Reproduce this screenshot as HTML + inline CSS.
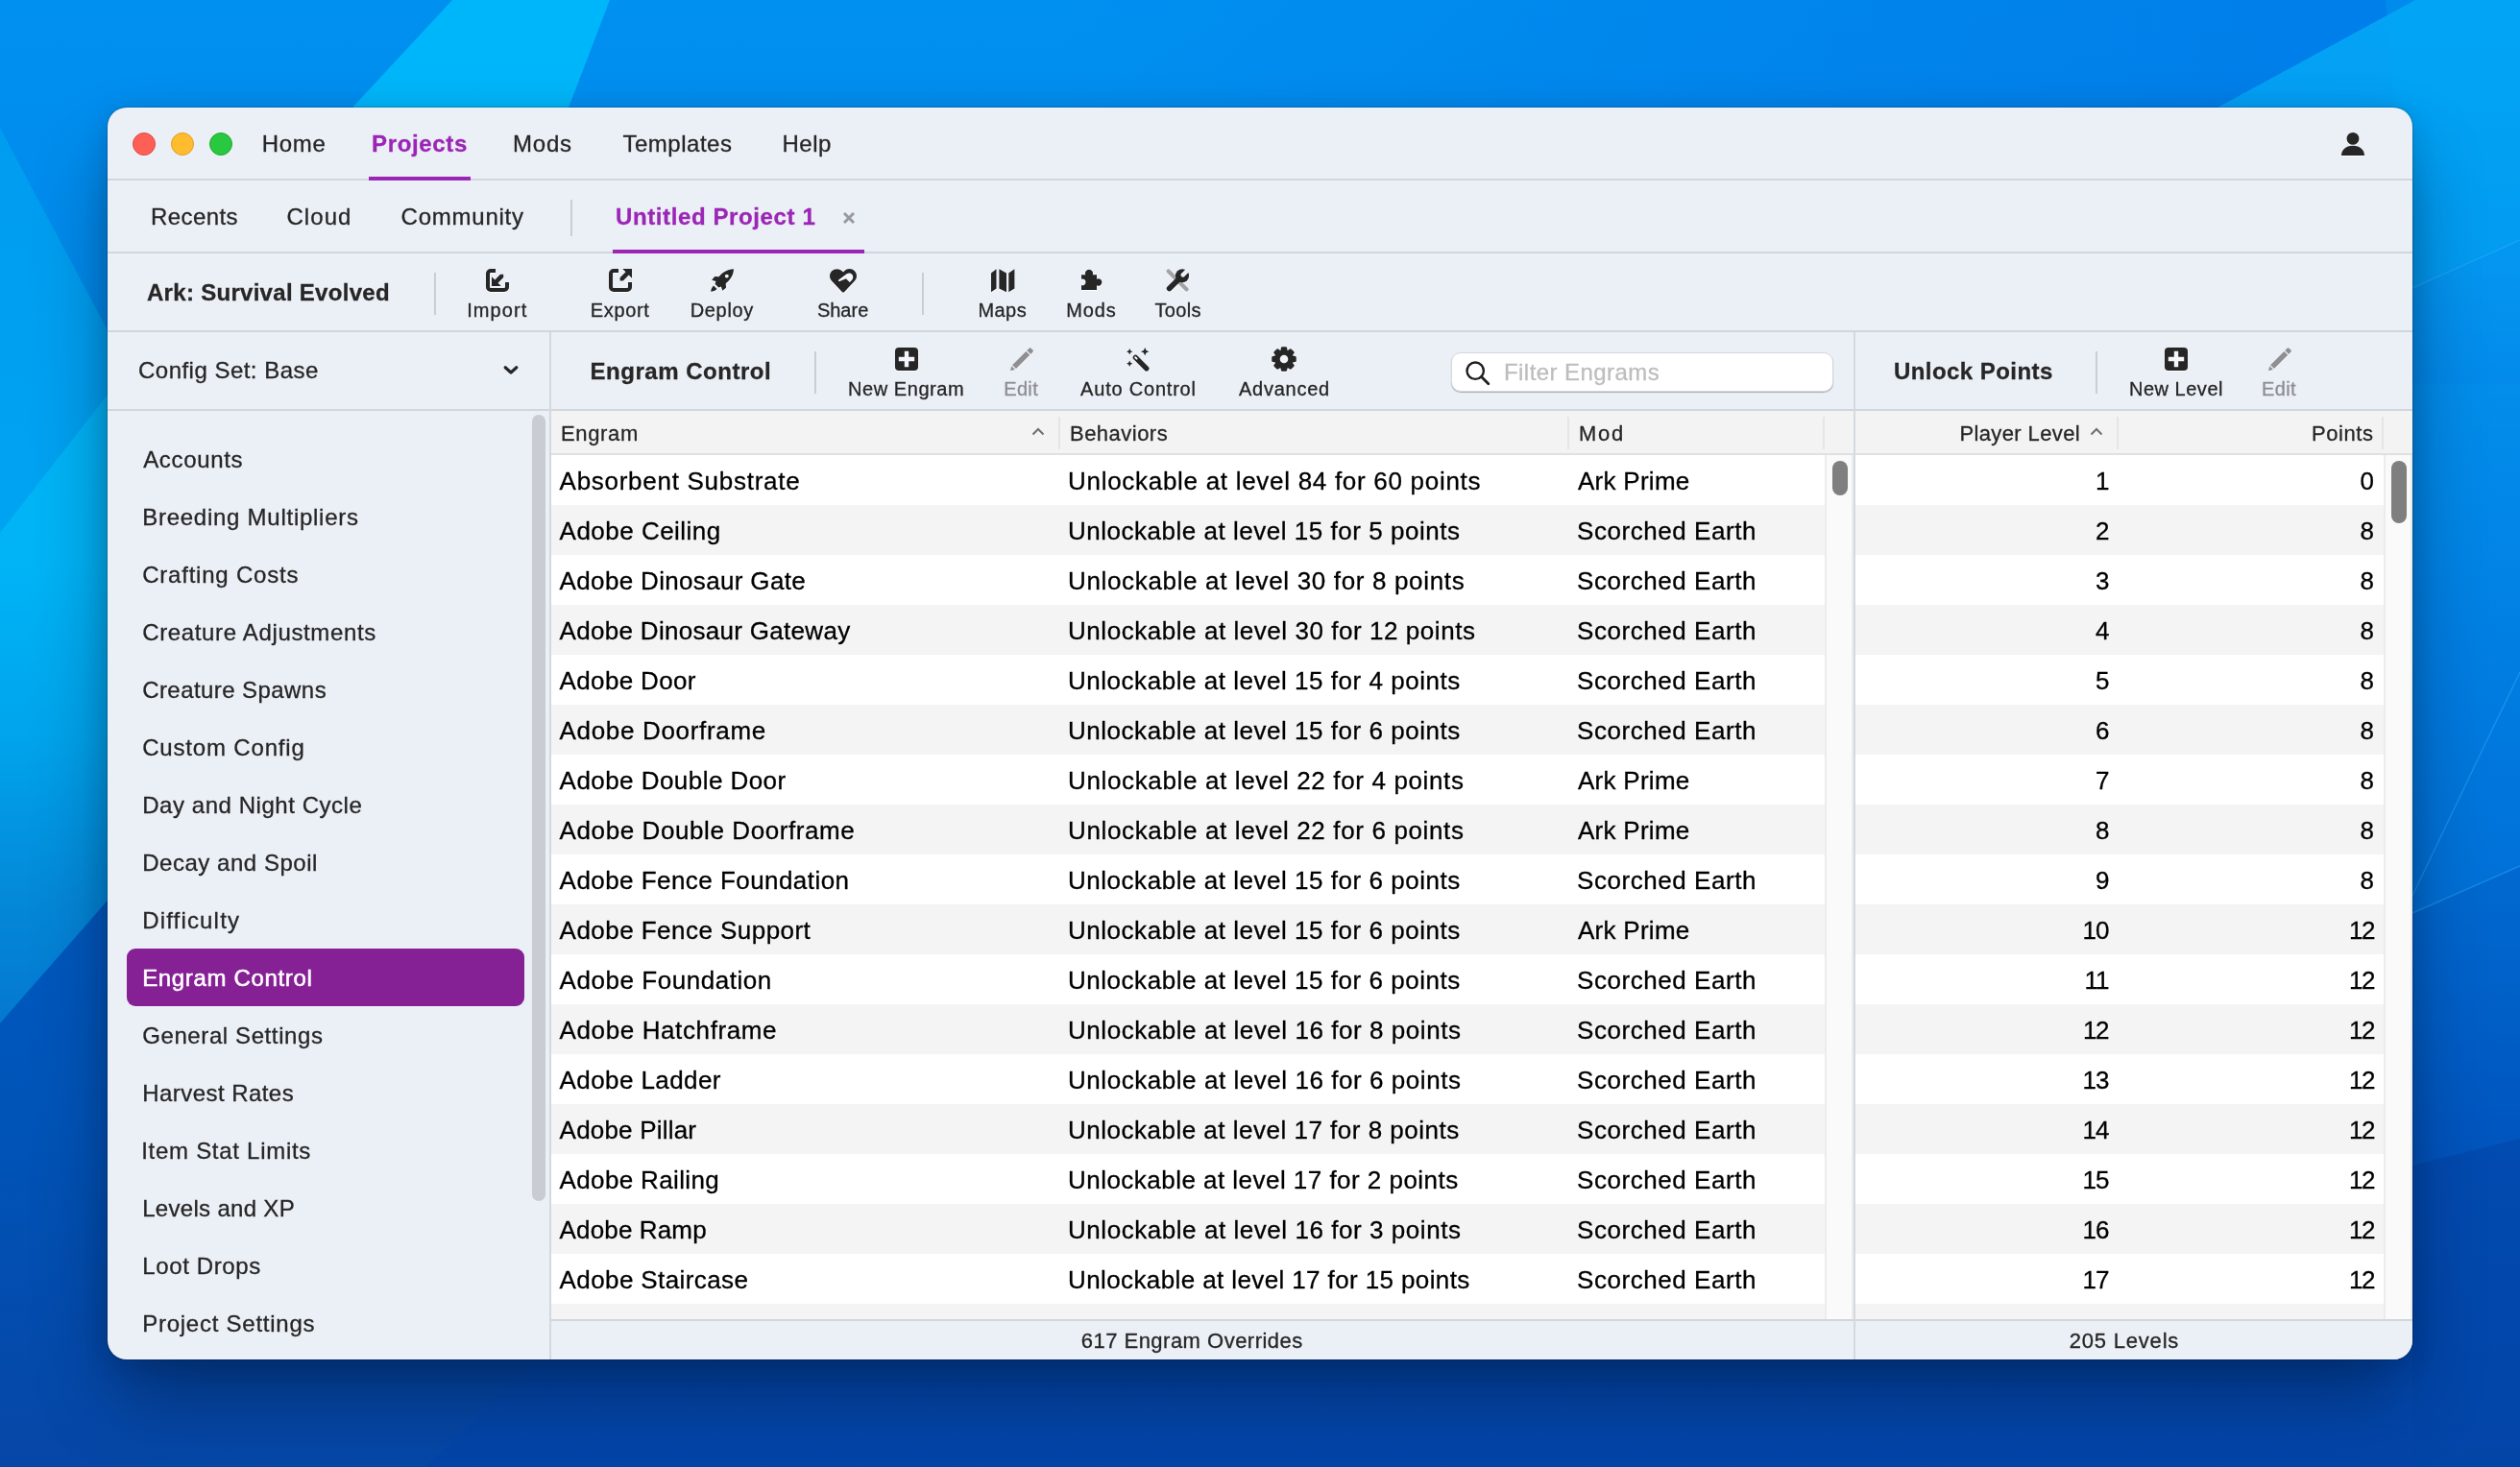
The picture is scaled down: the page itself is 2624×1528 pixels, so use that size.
<!DOCTYPE html><html lang="en"><head><meta charset="utf-8"><title>Beacon - Untitled Project 1</title>
<style>
html,body{margin:0;padding:0}
body{width:2624px;height:1528px;overflow:hidden;position:relative;background:#0a6fd6;font-family:"Liberation Sans", sans-serif;color:#262626}
#wall{position:absolute;left:0;top:0}
#fg{position:absolute;left:0;top:0;width:2624px;height:1528px;will-change:transform}
.t{position:absolute;white-space:nowrap;line-height:1.2;-webkit-text-stroke:.3px currentColor}
.ic{position:absolute;overflow:visible;filter:drop-shadow(0 1px 0 rgba(255,255,255,.85))}
#win{position:absolute;left:112px;top:112px;width:2400px;height:1304px;border-radius:20px;background:#ebeff6;
 box-shadow:0 0 0 1px rgba(0,0,0,.16),0 44px 80px -8px rgba(0,12,40,.46),0 6px 26px rgba(0,12,40,.15)}
#clip{position:absolute;left:112px;top:112px;width:2400px;height:1304px;border-radius:20px;overflow:hidden}
#clip>*{position:absolute}
.g{display:contents}
.sel{-webkit-text-stroke:.55px currentColor}
.hl{position:absolute;left:0;width:2400px;height:2px;background:#d1d5dc}
.vl{position:absolute;width:2px;background:#d4d8df}
.sep{position:absolute;width:2px;background:#c9cdd4}
.tl{position:absolute;width:24px;height:24px;border-radius:50%;top:138px;box-sizing:border-box}
.row{position:absolute;height:52px}
.alt{background:#f4f4f5}
.wh{background:#fff}

</style></head><body>
<svg id="wall" width="2624" height="1528" viewBox="0 0 2624 1528">
<defs>
<linearGradient id="g0" x1="0" y1="0" x2="0" y2="1"><stop offset="0" stop-color="#0090f0"/><stop offset=".35" stop-color="#0086e8"/><stop offset=".62" stop-color="#006fd6"/><stop offset=".8" stop-color="#0054be"/><stop offset="1" stop-color="#0444a8"/></linearGradient>
<linearGradient id="gA" x1="0" y1="0" x2="0" y2="1"><stop offset="0" stop-color="#00b6fa"/><stop offset=".55" stop-color="#00b4f6"/><stop offset=".72" stop-color="#00a4ec"/><stop offset=".88" stop-color="#0488d8"/><stop offset="1" stop-color="#0478d0"/></linearGradient>
<linearGradient id="gB" x1="0" y1="0" x2="0" y2="1"><stop offset="0" stop-color="#009cf0"/><stop offset="1" stop-color="#00a6f2"/></linearGradient>
<linearGradient id="gR" x1="0" y1="0" x2="0" y2="700" gradientUnits="userSpaceOnUse"><stop offset="0" stop-color="#04a4f6"/><stop offset=".4" stop-color="#0496f0"/><stop offset="1" stop-color="#0480e0" stop-opacity="0"/></linearGradient>
<linearGradient id="gT" x1="1100" y1="0" x2="2400" y2="0" gradientUnits="userSpaceOnUse"><stop offset="0" stop-color="#0070e4" stop-opacity="0"/><stop offset="1" stop-color="#0070e4" stop-opacity=".55"/></linearGradient>
<linearGradient id="gD" x1="0" y1="0" x2="0" y2="1"><stop offset="0" stop-color="#0060c8"/><stop offset=".6" stop-color="#0054b8"/><stop offset="1" stop-color="#0646a6"/></linearGradient>
</defs>
<rect width="2624" height="1528" fill="url(#g0)"/>
<polygon points="0,133 112,344 400,700 0,700" fill="url(#gB)"/>
<polygon points="0,555 112,411 367,112 471,0 635,0 592,112 401,610 112,938 0,1066" fill="url(#gA)"/>
<polygon points="0,1066 112,938 401,610 700,1100 560,1416 443,1528 0,1528" fill="url(#gD)"/>
<rect x="1100" y="0" width="1524" height="400" fill="url(#gT)"/>
<polygon points="2515,0 2624,0 2624,700 2512,700 2512,300 2309,112" fill="url(#gR)"/>
<polygon points="2484,0 2624,0 2624,250 2512,300 2492,112" fill="#00a8f6" opacity=".3"/>
<polygon points="2512,951 2624,902 2624,1528 2512,1528" fill="#0050b8" opacity=".25"/>
<polygon points="2512,1214 2624,1186 2624,1528 2512,1528" fill="#0444a4" opacity=".55"/>
<g stroke="#38b4ff" stroke-opacity=".4" stroke-width="1.500" fill="none"><path d="M2512 300L2624 250M2512 933L2593 764L2624 700M2512 951L2624 902"/></g>
</svg>
<div id="win"></div><div id="clip">
<div class="hl" style="top:74px"></div>
<div class="hl" style="top:150px"></div>
<div class="hl" style="top:232px"></div>
<div class="hl" style="top:314px"></div>
<div style="left:462px;top:316px;width:1356px;height:44px;background:#f3f3f3"></div>
<div style="left:1820px;top:316px;width:580px;height:44px;background:#f3f3f3"></div>
<div style="left:462px;top:360px;width:1938px;height:2px;background:#dfe0e2"></div>
<div class="row wh" style="left:462px;top:362px;width:1326px"></div>
<div class="row wh" style="left:1820px;top:362px;width:550px"></div>
<div class="row alt" style="left:462px;top:414px;width:1326px"></div>
<div class="row alt" style="left:1820px;top:414px;width:550px"></div>
<div class="row wh" style="left:462px;top:466px;width:1326px"></div>
<div class="row wh" style="left:1820px;top:466px;width:550px"></div>
<div class="row alt" style="left:462px;top:518px;width:1326px"></div>
<div class="row alt" style="left:1820px;top:518px;width:550px"></div>
<div class="row wh" style="left:462px;top:570px;width:1326px"></div>
<div class="row wh" style="left:1820px;top:570px;width:550px"></div>
<div class="row alt" style="left:462px;top:622px;width:1326px"></div>
<div class="row alt" style="left:1820px;top:622px;width:550px"></div>
<div class="row wh" style="left:462px;top:674px;width:1326px"></div>
<div class="row wh" style="left:1820px;top:674px;width:550px"></div>
<div class="row alt" style="left:462px;top:726px;width:1326px"></div>
<div class="row alt" style="left:1820px;top:726px;width:550px"></div>
<div class="row wh" style="left:462px;top:778px;width:1326px"></div>
<div class="row wh" style="left:1820px;top:778px;width:550px"></div>
<div class="row alt" style="left:462px;top:830px;width:1326px"></div>
<div class="row alt" style="left:1820px;top:830px;width:550px"></div>
<div class="row wh" style="left:462px;top:882px;width:1326px"></div>
<div class="row wh" style="left:1820px;top:882px;width:550px"></div>
<div class="row alt" style="left:462px;top:934px;width:1326px"></div>
<div class="row alt" style="left:1820px;top:934px;width:550px"></div>
<div class="row wh" style="left:462px;top:986px;width:1326px"></div>
<div class="row wh" style="left:1820px;top:986px;width:550px"></div>
<div class="row alt" style="left:462px;top:1038px;width:1326px"></div>
<div class="row alt" style="left:1820px;top:1038px;width:550px"></div>
<div class="row wh" style="left:462px;top:1090px;width:1326px"></div>
<div class="row wh" style="left:1820px;top:1090px;width:550px"></div>
<div class="row alt" style="left:462px;top:1142px;width:1326px"></div>
<div class="row alt" style="left:1820px;top:1142px;width:550px"></div>
<div class="row wh" style="left:462px;top:1194px;width:1326px"></div>
<div class="row wh" style="left:1820px;top:1194px;width:550px"></div>
<div class="row alt" style="left:462px;top:1246px;width:1326px"></div>
<div class="row alt" style="left:1820px;top:1246px;width:550px"></div>
<div style="left:1788px;top:362px;width:30px;height:900px;background:#fafafa;border-left:2px solid #ececec;border-right:2px solid #ececec;box-sizing:border-box"></div>
<div style="left:2370px;top:362px;width:30px;height:900px;background:#fafafa;border-left:2px solid #ececec;border-right:2px solid #ececec;box-sizing:border-box"></div>
<div style="left:1796px;top:368px;width:16px;height:36px;border-radius:8px;background:#7f7f7f"></div>
<div style="left:2378px;top:368px;width:16px;height:65px;border-radius:8px;background:#7f7f7f"></div>
<div style="left:462px;top:1262px;width:1938px;height:42px;background:#ebeff6"></div>
<div style="left:462px;top:1262px;width:1938px;height:2px;background:#d1d5dc"></div>
<div class="vl" style="left:460px;top:234px;height:1070px"></div>
<div class="vl" style="left:1818px;top:234px;height:1070px"></div>
<div style="left:990px;top:322px;width:2px;height:34px;background:#e5e5e7"></div>
<div style="left:1520px;top:322px;width:2px;height:34px;background:#e5e5e7"></div>
<div style="left:1786px;top:322px;width:2px;height:34px;background:#e5e5e7"></div>
<div style="left:2092px;top:322px;width:2px;height:34px;background:#e5e5e7"></div>
<div style="left:2368px;top:322px;width:2px;height:34px;background:#e5e5e7"></div>
<div style="left:442px;top:320px;width:14px;height:819px;border-radius:7px;background:#c9ccd2"></div>
<div style="left:20px;top:876px;width:414px;height:60px;border-radius:9px;background:#852095"></div>
<div style="left:272px;top:72px;width:106px;height:4px;background:#9b26b6"></div>
<div style="left:526px;top:148px;width:262px;height:4px;background:#9b26b6"></div>
<div class="sep" style="left:482px;top:96px;height:38px"></div>
<div class="sep" style="left:340px;top:172px;height:44px"></div>
<div class="sep" style="left:848px;top:172px;height:44px"></div>
<div class="sep" style="left:736px;top:254px;height:44px"></div>
<div class="sep" style="left:2070px;top:254px;height:44px"></div>
<div style="left:1399px;top:255px;width:398px;height:41px;border-radius:10px;background:#fff;box-sizing:border-box;border:1px solid #d3d8e0;box-shadow:0 1px 1px rgba(0,0,0,.28)"></div>
</div>
<div class="tl" style="left:138px;background:#fe5f57;border:1px solid #e2463f"></div>
<div class="tl" style="left:178px;background:#febc2e;border:1px solid #dfa023"></div>
<div class="tl" style="left:218px;background:#28c840;border:1px solid #1fab2f"></div>
<div id="fg">
<nav class="g" aria-label="Main menu">
<span class="t" style="left:272.7px;top:136.3px;font-size:24px;letter-spacing:0.71px;">Home</span>
<span class="t" style="left:387.0px;top:136.3px;font-size:24px;font-weight:700;color:#9b26b6;letter-spacing:0.66px;">Projects</span>
<span class="t" style="left:534.0px;top:136.3px;font-size:24px;letter-spacing:0.77px;">Mods</span>
<span class="t" style="left:648.5px;top:136.3px;font-size:24px;letter-spacing:0.51px;">Templates</span>
<span class="t" style="left:814.4px;top:136.3px;font-size:24px;letter-spacing:0.53px;">Help</span>
</nav>
<nav class="g" aria-label="Project tabs">
<span class="t" style="left:157.0px;top:211.8px;font-size:24px;letter-spacing:0.43px;">Recents</span>
<span class="t" style="left:298.5px;top:211.8px;font-size:24px;letter-spacing:1.04px;">Cloud</span>
<span class="t" style="left:417.6px;top:211.8px;font-size:24px;letter-spacing:0.76px;">Community</span>
<span class="t" style="left:641.0px;top:211.8px;font-size:24px;font-weight:700;color:#9b26b6;letter-spacing:0.61px;">Untitled Project 1</span>
<svg class="ic" style="left:878px;top:221px;filter:none" width="12" height="12" viewBox="0 0 12 12"><path d="M1 1l10 10M11 1L1 11" stroke="#98999d" stroke-width="2.900"/></svg>
</nav>
<section class="g" aria-label="Project toolbar">
<span class="t" style="left:153.0px;top:291.3px;font-size:24px;font-weight:700;letter-spacing:0.29px;">Ark: Survival Evolved</span>
<span class="t" style="left:486.2px;top:310.7px;font-size:20px;letter-spacing:1.08px;">Import</span>
<svg class="ic" style="left:506px;top:280px" width="24" height="24" viewBox="0 0 24 24" ><path d="M10 2H5a3 3 0 0 0-3 3v14a3 3 0 0 0 3 3h14a3 3 0 0 0 3-3v-5" fill="none" stroke="#262626" stroke-width="4"/><path d="M6 8.2V18h9.8l-3.3-3.3L18.2 9V5.8H15l-5.7 5.7z" fill="#262626"/></svg>
<span class="t" style="left:614.8px;top:310.7px;font-size:20px;letter-spacing:0.65px;">Export</span>
<svg class="ic" style="left:634px;top:280px" width="24" height="24" viewBox="0 0 24 24" ><path d="M10 2H5a3 3 0 0 0-3 3v14a3 3 0 0 0 3 3h14a3 3 0 0 0 3-3v-5" fill="none" stroke="#262626" stroke-width="4"/><path d="M14.2 0H24v9.8l-3.3-3.3-5.9 5.9h-3.2V9.200l5.9-5.900z" fill="#262626"/></svg>
<span class="t" style="left:718.8px;top:310.7px;font-size:20px;letter-spacing:0.63px;">Deploy</span>
<svg class="ic" style="left:740px;top:280px" width="24" height="24" viewBox="0 0 24 24" ><path d="M24 0.300c-7 0.500-11.500 3.200-15.300 8.000L4.200 8.000 1.200 11.700l4.300 1.400-1.000 2.600 3.800 3.800 2.600-1.000 1.400 4.300 3.700-3.000-0.300-4.500C20.500 11.500 23.500 7.000 24 0.300z" fill="#262626"/><circle cx="16.800" cy="7.600" r="1.900" fill="#f4f6fb"/><path d="M3.000 17.500C1.200 19.300 0.300 21.500 0.200 23.800c2.300-0.100 4.500-1.000 6.300-2.800z" fill="#262626"/></svg>
<span class="t" style="left:850.9px;top:310.7px;font-size:20px;letter-spacing:0.01px;">Share</span>
<svg class="ic" style="left:864px;top:280px" width="28" height="24.5" viewBox="0 0 28 24.500" ><path d="M15.200 23.900a1.700 1.700 0 0 1-2.400 0L2.200 12.800C-0.700 9.900-0.700 5.200 2.200 2.300 5.100-0.600 9.800-0.600 12.700 2.300L14 3.600l1.300-1.300c2.900-2.900 7.600-2.900 10.500 0 2.900 2.900 2.900 7.600 0 10.500z" fill="#262626"/><path d="M9.200 11.400L17.600 5.200c2.000-1.400 4.700-0.900 6.000 1.100 1.200 1.900 0.800 4.300-0.800 5.800l-2.000 1.900-3.900-3.700-6.600 2.700c-0.900 0.400-1.700-0.600-1.100-1.600z" fill="#f4f6fb"/></svg>
<span class="t" style="left:1018.4px;top:310.7px;font-size:20px;letter-spacing:0.46px;">Maps</span>
<svg class="ic" style="left:1032px;top:280px" width="24.4" height="24.2" viewBox="0 0 24.400 24.200" ><path d="M0 4.600L5.500 0.300V20.500L0 24.200zM8.400 0.300L16 4.600V24.200L8.400 20.500zM18.300 4.600L24.400 0.300V20.500L18.300 24.200z" fill="#262626"/></svg>
<span class="t" style="left:1110.3px;top:310.7px;font-size:20px;letter-spacing:0.83px;">Mods</span>
<svg class="ic" style="left:1126px;top:280px" width="22.4" height="22" viewBox="0 0 22.400 22" ><path d="M0 6.200h4.300a4 4 0 1 1 7.400 0H16v4.500a3.700 3.700 0 1 1 0 6.600V22H0v-4.900a3.400 3.400 0 1 0 0-6.400z" fill="#262626"/></svg>
<span class="t" style="left:1202.5px;top:310.7px;font-size:20px;letter-spacing:0.33px;">Tools</span>
<svg class="ic" style="left:1214px;top:280px" width="24" height="24" viewBox="0 0 24 24" ><defs><mask id="wm" maskUnits="userSpaceOnUse" x="-2" y="-2" width="30" height="30"><rect x="-2" y="-2" width="30" height="30" fill="#fff"/><path d="M17.800 6.400L27 -2.800" stroke="#000" stroke-width="4.400" stroke-linecap="round"/></mask></defs><path d="M2.600 2.600L21.600 21.600" stroke="#a3a4a8" stroke-width="4.200" stroke-linecap="round"/><g mask="url(#wm)"><path d="M3.600 20.600L15 9.200" stroke="#262626" stroke-width="5.600" stroke-linecap="round"/><circle cx="17" cy="7.200" r="7" fill="#262626"/></g></svg>
</section>
<section class="g" aria-label="Editor toolbar">
<span class="t" style="left:144.0px;top:372.3px;font-size:24px;letter-spacing:0.48px;">Config Set: Base</span>
<svg class="ic" style="left:524px;top:380px;filter:none" width="16" height="11" viewBox="0 0 16 11"><path d="M2.200 2.800L8 8l5.800-5.200" fill="none" stroke="#262626" stroke-width="3.200" stroke-linecap="round" stroke-linejoin="round"/></svg>
<span class="t" style="left:614.5px;top:373.3px;font-size:24px;font-weight:700;letter-spacing:0.53px;">Engram Control</span>
<span class="t" style="left:883.0px;top:392.7px;font-size:20px;letter-spacing:0.56px;">New Engram</span>
<svg class="ic" style="left:932px;top:362px" width="24" height="24" viewBox="0 0 24 24" ><rect x="0" y="0" width="24" height="24" rx="4" fill="#262626"/><path d="M9.800 3.800h4.400v6h6v4.400h-6v6H9.800v-6h-6V9.800h6z" fill="#f4f6fb"/></svg>
<span class="t" style="left:1045.2px;top:392.7px;font-size:20px;color:#8e8e92;letter-spacing:0.36px;">Edit</span>
<svg class="ic" style="left:1052px;top:362px" width="24" height="24" viewBox="0 0 24 24" ><g fill="#8f8f93"><path d="M0 24.200L1.300 19.200 5 22.900z"/><path d="M2.100 18.200L16.400 3.900l3.900 3.900L6 22.100z"/><path d="M17.300 3l2.100-2.100a1.700 1.700 0 0 1 2.400 0l1.500 1.500a1.700 1.700 0 0 1 0 2.400l-2.100 2.100z"/></g></svg>
<span class="t" style="left:1125.1px;top:392.7px;font-size:20px;letter-spacing:0.79px;">Auto Control</span>
<svg class="ic" style="left:1173px;top:362px" width="24" height="24" viewBox="0 0 24 24" ><path d="M9.400 10.400L20.800 21.800" stroke="#262626" stroke-width="5.400" stroke-linecap="round"/><path d="M9.200 10.200L10.600 11.600" stroke="#f4f6fb" stroke-width="2.000" stroke-linecap="round"/><g fill="#262626"><path d="M3.200 1l1 2.200 2.200 1-2.200 1-1 2.200-1-2.200L0 4.200l2.200-1z"/><path d="M19.200 0l1.300 2.900 2.900 1.300-2.900 1.300-1.300 2.900-1.300-2.900L15 4.200l2.900-1.300z"/><path d="M3.200 13.600l1 2.200 2.200 1-2.200 1-1 2.200-1-2.200-2.200-1 2.200-1z"/></g></svg>
<span class="t" style="left:1290.0px;top:392.7px;font-size:20px;letter-spacing:0.74px;">Advanced</span>
<svg class="ic" style="left:1324px;top:361px" width="26" height="26" viewBox="0 0 26 26" ><path d="M10.74 4.49L11.19 1.54L14.81 1.54L15.26 4.49L17.42 5.39L19.82 3.62L22.38 6.18L20.61 8.58L21.51 10.74L24.46 11.19L24.46 14.81L21.51 15.26L20.61 17.42L22.38 19.82L19.82 22.38L17.42 20.61L15.26 21.51L14.81 24.46L11.19 24.46L10.74 21.51L8.58 20.61L6.18 22.38L3.62 19.82L5.39 17.42L4.49 15.26L1.54 14.81L1.54 11.19L4.49 10.74L5.39 8.58L3.62 6.18L6.18 3.62L8.58 5.39Z" fill="#262626" stroke="#262626" stroke-width="2.600" stroke-linejoin="round"/><circle cx="13" cy="13" r="4.300" fill="#f1f4fa"/></svg>
<span class="t" style="left:2217.0px;top:392.7px;font-size:20px;letter-spacing:0.51px;">New Level</span>
<svg class="ic" style="left:2254px;top:362px" width="24" height="24" viewBox="0 0 24 24" ><rect x="0" y="0" width="24" height="24" rx="4" fill="#262626"/><path d="M9.800 3.800h4.400v6h6v4.400h-6v6H9.800v-6h-6V9.800h6z" fill="#f4f6fb"/></svg>
<span class="t" style="left:2355.0px;top:392.7px;font-size:20px;color:#8e8e92;letter-spacing:0.36px;">Edit</span>
<svg class="ic" style="left:2362px;top:362px" width="24" height="24" viewBox="0 0 24 24" ><g fill="#8f8f93"><path d="M0 24.200L1.300 19.200 5 22.900z"/><path d="M2.100 18.200L16.400 3.900l3.900 3.900L6 22.100z"/><path d="M17.300 3l2.100-2.100a1.700 1.700 0 0 1 2.400 0l1.500 1.500a1.700 1.700 0 0 1 0 2.400l-2.100 2.100z"/></g></svg>
<svg class="ic" style="left:1526px;top:376px" width="25" height="25" viewBox="0 0 25 25"><circle cx="10.200" cy="10.200" r="8.700" fill="none" stroke="#1f1f1f" stroke-width="2.400"/><path d="M16.600 16.600L23.800 23.800" stroke="#1f1f1f" stroke-width="2.800" stroke-linecap="round"/></svg>
<span class="t" style="left:1566.0px;top:374.3px;font-size:24px;color:#bdbdbf;letter-spacing:0.44px;">Filter Engrams</span>
<span class="t" style="left:1972.0px;top:373.3px;font-size:24px;font-weight:700;letter-spacing:0.44px;">Unlock Points</span>
<svg class="ic" style="left:2438px;top:138px" width="24" height="24" viewBox="0 0 24 24" ><circle cx="12" cy="6.400" r="6.400" fill="#262626"/><path d="M0 24c0-6 4.500-10.300 12-10.300S24 18 24 24z" fill="#262626"/></svg>
</section>
<section class="g" aria-label="Lists">
<div class="g" role="row">
<span class="t" style="left:584.0px;top:438.7px;font-size:22px;letter-spacing:0.66px;">Engram</span>
<span class="t" style="left:1114.0px;top:438.7px;font-size:22px;letter-spacing:0.48px;">Behaviors</span>
<span class="t" style="left:1644.0px;top:438.7px;font-size:22px;letter-spacing:1.72px;">Mod</span>
<span class="t" style="left:2040.4px;top:438.7px;font-size:22px;letter-spacing:0.38px;">Player Level</span>
<span class="t" style="left:2407.0px;top:438.7px;font-size:22px;letter-spacing:0.57px;">Points</span>
<svg class="ic" style="left:1074px;top:444px;filter:none" width="14" height="11" viewBox="0 0 14 11"><path d="M1.500 8.500L7 3l5.500 5.500" fill="none" stroke="#6f6f72" stroke-width="2"/></svg>
<svg class="ic" style="left:2176px;top:444px;filter:none" width="14" height="11" viewBox="0 0 14 11"><path d="M1.500 8.500L7 3l5.500 5.500" fill="none" stroke="#6f6f72" stroke-width="2"/></svg>
</div>
<div class="g" role="row">
<span class="t" style="left:582.6px;top:486.4px;font-size:26px;color:#000;letter-spacing:0.72px;">Absorbent Substrate</span>
<span class="t" style="left:1112.0px;top:486.4px;font-size:26px;color:#000;letter-spacing:0.71px;">Unlockable at level 84 for 60 points</span>
<span class="t" style="left:1643.0px;top:486.4px;font-size:26px;color:#000;letter-spacing:0.27px;">Ark Prime</span>
<span class="t" style="left:2182.0px;top:486.4px;font-size:26px;color:#000;">1</span>
<span class="t" style="left:2457.5px;top:486.4px;font-size:26px;color:#000;">0</span>
</div>
<div class="g" role="row">
<span class="t" style="left:582.6px;top:538.4px;font-size:26px;color:#000;letter-spacing:0.48px;">Adobe Ceiling</span>
<span class="t" style="left:1112.0px;top:538.4px;font-size:26px;color:#000;letter-spacing:0.52px;">Unlockable at level 15 for 5 points</span>
<span class="t" style="left:1642.0px;top:538.4px;font-size:26px;color:#000;letter-spacing:0.56px;">Scorched Earth</span>
<span class="t" style="left:2182.0px;top:538.4px;font-size:26px;color:#000;">2</span>
<span class="t" style="left:2457.5px;top:538.4px;font-size:26px;color:#000;">8</span>
</div>
<div class="g" role="row">
<span class="t" style="left:582.6px;top:590.4px;font-size:26px;color:#000;letter-spacing:0.34px;">Adobe Dinosaur Gate</span>
<span class="t" style="left:1112.0px;top:590.4px;font-size:26px;color:#000;letter-spacing:0.66px;">Unlockable at level 30 for 8 points</span>
<span class="t" style="left:1642.0px;top:590.4px;font-size:26px;color:#000;letter-spacing:0.56px;">Scorched Earth</span>
<span class="t" style="left:2182.0px;top:590.4px;font-size:26px;color:#000;">3</span>
<span class="t" style="left:2457.5px;top:590.4px;font-size:26px;color:#000;">8</span>
</div>
<div class="g" role="row">
<span class="t" style="left:582.6px;top:642.4px;font-size:26px;color:#000;letter-spacing:0.30px;">Adobe Dinosaur Gateway</span>
<span class="t" style="left:1112.0px;top:642.4px;font-size:26px;color:#000;letter-spacing:0.55px;">Unlockable at level 30 for 12 points</span>
<span class="t" style="left:1642.0px;top:642.4px;font-size:26px;color:#000;letter-spacing:0.56px;">Scorched Earth</span>
<span class="t" style="left:2182.0px;top:642.4px;font-size:26px;color:#000;">4</span>
<span class="t" style="left:2457.5px;top:642.4px;font-size:26px;color:#000;">8</span>
</div>
<div class="g" role="row">
<span class="t" style="left:582.6px;top:694.4px;font-size:26px;color:#000;letter-spacing:0.34px;">Adobe Door</span>
<span class="t" style="left:1112.0px;top:694.4px;font-size:26px;color:#000;letter-spacing:0.53px;">Unlockable at level 15 for 4 points</span>
<span class="t" style="left:1642.0px;top:694.4px;font-size:26px;color:#000;letter-spacing:0.56px;">Scorched Earth</span>
<span class="t" style="left:2182.0px;top:694.4px;font-size:26px;color:#000;">5</span>
<span class="t" style="left:2457.5px;top:694.4px;font-size:26px;color:#000;">8</span>
</div>
<div class="g" role="row">
<span class="t" style="left:582.6px;top:746.4px;font-size:26px;color:#000;letter-spacing:0.67px;">Adobe Doorframe</span>
<span class="t" style="left:1112.0px;top:746.4px;font-size:26px;color:#000;letter-spacing:0.53px;">Unlockable at level 15 for 6 points</span>
<span class="t" style="left:1642.0px;top:746.4px;font-size:26px;color:#000;letter-spacing:0.56px;">Scorched Earth</span>
<span class="t" style="left:2182.0px;top:746.4px;font-size:26px;color:#000;">6</span>
<span class="t" style="left:2457.5px;top:746.4px;font-size:26px;color:#000;">8</span>
</div>
<div class="g" role="row">
<span class="t" style="left:582.6px;top:798.4px;font-size:26px;color:#000;letter-spacing:0.45px;">Adobe Double Door</span>
<span class="t" style="left:1112.0px;top:798.4px;font-size:26px;color:#000;letter-spacing:0.64px;">Unlockable at level 22 for 4 points</span>
<span class="t" style="left:1643.0px;top:798.4px;font-size:26px;color:#000;letter-spacing:0.27px;">Ark Prime</span>
<span class="t" style="left:2182.0px;top:798.4px;font-size:26px;color:#000;">7</span>
<span class="t" style="left:2457.5px;top:798.4px;font-size:26px;color:#000;">8</span>
</div>
<div class="g" role="row">
<span class="t" style="left:582.6px;top:850.4px;font-size:26px;color:#000;letter-spacing:0.59px;">Adobe Double Doorframe</span>
<span class="t" style="left:1112.0px;top:850.4px;font-size:26px;color:#000;letter-spacing:0.64px;">Unlockable at level 22 for 6 points</span>
<span class="t" style="left:1643.0px;top:850.4px;font-size:26px;color:#000;letter-spacing:0.27px;">Ark Prime</span>
<span class="t" style="left:2182.0px;top:850.4px;font-size:26px;color:#000;">8</span>
<span class="t" style="left:2457.5px;top:850.4px;font-size:26px;color:#000;">8</span>
</div>
<div class="g" role="row">
<span class="t" style="left:582.6px;top:902.4px;font-size:26px;color:#000;letter-spacing:0.45px;">Adobe Fence Foundation</span>
<span class="t" style="left:1112.0px;top:902.4px;font-size:26px;color:#000;letter-spacing:0.53px;">Unlockable at level 15 for 6 points</span>
<span class="t" style="left:1642.0px;top:902.4px;font-size:26px;color:#000;letter-spacing:0.56px;">Scorched Earth</span>
<span class="t" style="left:2182.0px;top:902.4px;font-size:26px;color:#000;">9</span>
<span class="t" style="left:2457.5px;top:902.4px;font-size:26px;color:#000;">8</span>
</div>
<div class="g" role="row">
<span class="t" style="left:582.6px;top:954.4px;font-size:26px;color:#000;letter-spacing:0.46px;">Adobe Fence Support</span>
<span class="t" style="left:1112.0px;top:954.4px;font-size:26px;color:#000;letter-spacing:0.53px;">Unlockable at level 15 for 6 points</span>
<span class="t" style="left:1643.0px;top:954.4px;font-size:26px;color:#000;letter-spacing:0.27px;">Ark Prime</span>
<span class="t" style="left:2168.5px;top:954.4px;font-size:26px;color:#000;letter-spacing:-0.96px;">10</span>
<span class="t" style="left:2446.0px;top:954.4px;font-size:26px;color:#000;letter-spacing:-1.46px;">12</span>
</div>
<div class="g" role="row">
<span class="t" style="left:582.6px;top:1006.4px;font-size:26px;color:#000;letter-spacing:0.54px;">Adobe Foundation</span>
<span class="t" style="left:1112.0px;top:1006.4px;font-size:26px;color:#000;letter-spacing:0.53px;">Unlockable at level 15 for 6 points</span>
<span class="t" style="left:1642.0px;top:1006.4px;font-size:26px;color:#000;letter-spacing:0.56px;">Scorched Earth</span>
<span class="t" style="left:2170.5px;top:1006.4px;font-size:26px;color:#000;letter-spacing:-1.03px;">11</span>
<span class="t" style="left:2446.0px;top:1006.4px;font-size:26px;color:#000;letter-spacing:-1.46px;">12</span>
</div>
<div class="g" role="row">
<span class="t" style="left:582.6px;top:1058.4px;font-size:26px;color:#000;letter-spacing:0.61px;">Adobe Hatchframe</span>
<span class="t" style="left:1112.0px;top:1058.4px;font-size:26px;color:#000;letter-spacing:0.55px;">Unlockable at level 16 for 8 points</span>
<span class="t" style="left:1642.0px;top:1058.4px;font-size:26px;color:#000;letter-spacing:0.56px;">Scorched Earth</span>
<span class="t" style="left:2169.0px;top:1058.4px;font-size:26px;color:#000;letter-spacing:-1.46px;">12</span>
<span class="t" style="left:2446.0px;top:1058.4px;font-size:26px;color:#000;letter-spacing:-1.46px;">12</span>
</div>
<div class="g" role="row">
<span class="t" style="left:582.6px;top:1110.4px;font-size:26px;color:#000;letter-spacing:0.41px;">Adobe Ladder</span>
<span class="t" style="left:1112.0px;top:1110.4px;font-size:26px;color:#000;letter-spacing:0.55px;">Unlockable at level 16 for 6 points</span>
<span class="t" style="left:1642.0px;top:1110.4px;font-size:26px;color:#000;letter-spacing:0.56px;">Scorched Earth</span>
<span class="t" style="left:2168.5px;top:1110.4px;font-size:26px;color:#000;letter-spacing:-0.96px;">13</span>
<span class="t" style="left:2446.0px;top:1110.4px;font-size:26px;color:#000;letter-spacing:-1.46px;">12</span>
</div>
<div class="g" role="row">
<span class="t" style="left:582.6px;top:1162.4px;font-size:26px;color:#000;letter-spacing:0.20px;">Adobe Pillar</span>
<span class="t" style="left:1112.0px;top:1162.4px;font-size:26px;color:#000;letter-spacing:0.50px;">Unlockable at level 17 for 8 points</span>
<span class="t" style="left:1642.0px;top:1162.4px;font-size:26px;color:#000;letter-spacing:0.56px;">Scorched Earth</span>
<span class="t" style="left:2168.5px;top:1162.4px;font-size:26px;color:#000;letter-spacing:-0.96px;">14</span>
<span class="t" style="left:2446.0px;top:1162.4px;font-size:26px;color:#000;letter-spacing:-1.46px;">12</span>
</div>
<div class="g" role="row">
<span class="t" style="left:582.6px;top:1214.4px;font-size:26px;color:#000;letter-spacing:0.35px;">Adobe Railing</span>
<span class="t" style="left:1112.0px;top:1214.4px;font-size:26px;color:#000;letter-spacing:0.47px;">Unlockable at level 17 for 2 points</span>
<span class="t" style="left:1642.0px;top:1214.4px;font-size:26px;color:#000;letter-spacing:0.56px;">Scorched Earth</span>
<span class="t" style="left:2168.5px;top:1214.4px;font-size:26px;color:#000;letter-spacing:-0.96px;">15</span>
<span class="t" style="left:2446.0px;top:1214.4px;font-size:26px;color:#000;letter-spacing:-1.46px;">12</span>
</div>
<div class="g" role="row">
<span class="t" style="left:582.6px;top:1266.4px;font-size:26px;color:#000;letter-spacing:0.14px;">Adobe Ramp</span>
<span class="t" style="left:1112.0px;top:1266.4px;font-size:26px;color:#000;letter-spacing:0.55px;">Unlockable at level 16 for 3 points</span>
<span class="t" style="left:1642.0px;top:1266.4px;font-size:26px;color:#000;letter-spacing:0.56px;">Scorched Earth</span>
<span class="t" style="left:2168.5px;top:1266.4px;font-size:26px;color:#000;letter-spacing:-0.96px;">16</span>
<span class="t" style="left:2446.0px;top:1266.4px;font-size:26px;color:#000;letter-spacing:-1.46px;">12</span>
</div>
<div class="g" role="row">
<span class="t" style="left:582.6px;top:1318.4px;font-size:26px;color:#000;letter-spacing:0.39px;">Adobe Staircase</span>
<span class="t" style="left:1112.0px;top:1318.4px;font-size:26px;color:#000;letter-spacing:0.39px;">Unlockable at level 17 for 15 points</span>
<span class="t" style="left:1642.0px;top:1318.4px;font-size:26px;color:#000;letter-spacing:0.56px;">Scorched Earth</span>
<span class="t" style="left:2168.5px;top:1318.4px;font-size:26px;color:#000;letter-spacing:-0.96px;">17</span>
<span class="t" style="left:2446.0px;top:1318.4px;font-size:26px;color:#000;letter-spacing:-1.46px;">12</span>
</div>
</section>
<aside class="g" aria-label="Editors">
<span class="t" style="left:149.2px;top:464.8px;font-size:24px;letter-spacing:0.67px;">Accounts</span>
<span class="t" style="left:148.2px;top:524.8px;font-size:24px;letter-spacing:0.74px;">Breeding Multipliers</span>
<span class="t" style="left:148.2px;top:584.8px;font-size:24px;letter-spacing:0.78px;">Crafting Costs</span>
<span class="t" style="left:148.2px;top:644.8px;font-size:24px;letter-spacing:0.65px;">Creature Adjustments</span>
<span class="t" style="left:148.2px;top:704.8px;font-size:24px;letter-spacing:0.43px;">Creature Spawns</span>
<span class="t" style="left:148.2px;top:764.8px;font-size:24px;letter-spacing:0.83px;">Custom Config</span>
<span class="t" style="left:148.2px;top:824.8px;font-size:24px;letter-spacing:0.55px;">Day and Night Cycle</span>
<span class="t" style="left:148.2px;top:884.8px;font-size:24px;letter-spacing:0.53px;">Decay and Spoil</span>
<span class="t" style="left:148.2px;top:944.8px;font-size:24px;letter-spacing:1.17px;">Difficulty</span>
<span class="t sel" style="left:148.2px;top:1004.8px;font-size:24px;color:#fff;letter-spacing:0.65px;">Engram Control</span>
<span class="t" style="left:148.2px;top:1064.8px;font-size:24px;letter-spacing:0.60px;">General Settings</span>
<span class="t" style="left:148.2px;top:1124.8px;font-size:24px;letter-spacing:0.45px;">Harvest Rates</span>
<span class="t" style="left:147.2px;top:1184.8px;font-size:24px;letter-spacing:0.72px;">Item Stat Limits</span>
<span class="t" style="left:148.2px;top:1244.8px;font-size:24px;letter-spacing:0.31px;">Levels and XP</span>
<span class="t" style="left:148.2px;top:1304.8px;font-size:24px;letter-spacing:0.64px;">Loot Drops</span>
<span class="t" style="left:148.2px;top:1364.8px;font-size:24px;letter-spacing:0.75px;">Project Settings</span>
</aside>
<footer class="g">
<span class="t" style="left:1125.7px;top:1384.2px;font-size:22px;letter-spacing:0.49px;">617 Engram Overrides</span>
<span class="t" style="left:2154.8px;top:1384.2px;font-size:22px;letter-spacing:0.79px;">205 Levels</span>
</footer>
</div>
</body></html>
